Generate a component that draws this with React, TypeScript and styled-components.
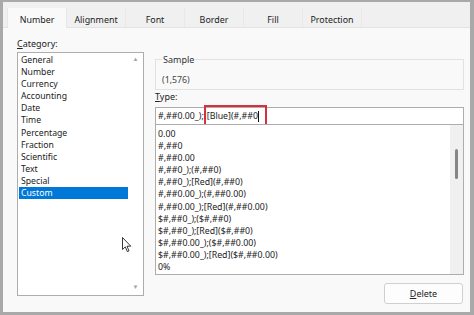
import React from "react";
import styled, { createGlobalStyle } from "styled-components";

interface RowProps {
  selected?: boolean;
}
interface TabProps {
  active?: boolean;
}

const tabs = ["Number", "Alignment", "Font", "Border", "Fill", "Protection"];
const categories = [
  "General",
  "Number",
  "Currency",
  "Accounting",
  "Date",
  "Time",
  "Percentage",
  "Fraction",
  "Scientific",
  "Text",
  "Special",
  "Custom",
];
const formats = [
  "0.00",
  "#,##0",
  "#,##0.00",
  "#,##0_);(#,##0)",
  "#,##0_);[Red](#,##0)",
  "#,##0.00_);(#,##0.00)",
  "#,##0.00_);[Red](#,##0.00)",
  "$#,##0_);($#,##0)",
  "$#,##0_);[Red]($#,##0)",
  "$#,##0.00_);($#,##0.00)",
  "$#,##0.00_);[Red]($#,##0.00)",
  "0%",
];

function App() {
  return (
    <>
      <GlobalStyle />
      <Frame>
        <TabBar>
          {tabs.map((t) => (
            <Tab key={t} active={t === "Number"}>
              {t}
            </Tab>
          ))}
        </TabBar>
        <Body>
          <LeftColumn>
            <Label>
              <u>C</u>ategory:
            </Label>
            <CategoryBox>
              <CategoryList>
                {categories.map((c) => (
                  <CategoryRow key={c} selected={c === "Custom"}>
                    {c}
                  </CategoryRow>
                ))}
              </CategoryList>
              <ThinScroll>
                <Arrow>▲</Arrow>
                <Arrow>▼</Arrow>
              </ThinScroll>
            </CategoryBox>
            <Pointer width="10" height="16" viewBox="0 0 10 16">
              <path
                d="M0.5 0.5 L0.5 12.5 L3.3 9.8 L5.3 14.6 L7 13.9 L5 9.2 L8.8 9.2 Z"
                fill="#fff"
                stroke="#222"
                strokeWidth="0.9"
                strokeLinejoin="round"
              />
            </Pointer>
          </LeftColumn>
          <RightColumn>
            <SampleBox>
              <legend>Sample</legend>
              <SampleValue>(1,576)</SampleValue>
            </SampleBox>
            <Label>
              <u>T</u>ype:
            </Label>
            <TypeInput>
              #,##0.00_);
              <Marked>
                [Blue](#,##0<Caret />
              </Marked>
            </TypeInput>
            <FormatBox>
              <FormatList>
                {formats.map((f) => (
                  <FormatRow key={f}>{f}</FormatRow>
                ))}
              </FormatList>
              <Track>
                <Thumb />
              </Track>
            </FormatBox>
            <ButtonRow>
              <DeleteButton>
                <u>D</u>elete
              </DeleteButton>
            </ButtonRow>
          </RightColumn>
        </Body>
      </Frame>
    </>
  );
}

export default App;

const GlobalStyle = createGlobalStyle`
  body {
    margin: 0;
    background: #f9f9f9;
    font-family: "Noto Sans", "Open Sans", sans-serif;
    color: #1a1a1a;
  }
  u { text-decoration-thickness: 1px; text-underline-offset: 1px; }
`;
const Frame = styled.div`
  width: 474px;
  height: 315px;
  box-sizing: border-box;
  border-style: solid;
  border-color: #a9a9a9;
  border-width: 2px 4px 3px 3px;
  background: #f9f9f9;
  display: flex;
  flex-direction: column;
`;
const TabBar = styled.div`
  height: 26px;
  flex: none;
  display: flex;
  padding: 6px 0 0 4px;
  background: #f0f0f0;
  border-bottom: 1px solid #e3e3e3;
  box-sizing: border-box;
`;
const Tab = styled.div<TabProps>`
  width: 58px;
  display: flex;
  align-items: center;
  justify-content: center;
  padding-top: 3px;
  font-size: 8.9px;
  color: #222;
  background: ${(p) => (p.active ? "#f9f9f9" : "transparent")};
  border-right: 1px solid ${(p) => (p.active ? "#e6e6e6" : "#e8e8e8")};
  border-left: ${(p) => (p.active ? "1px solid #e6e6e6" : "none")};
  margin-bottom: ${(p) => (p.active ? "-1px" : "0")};
`;
const Body = styled.div`
  flex: 1;
  display: grid;
  grid-template-columns: 127px 1fr;
  column-gap: 11px;
  padding: 9px 6px 0 14px;
`;
const LeftColumn = styled.div`
  position: relative;
  display: flex;
  flex-direction: column;
`;
const RightColumn = styled.div`
  display: flex;
  flex-direction: column;
  padding-top: 16px;
`;
const Label = styled.div`
  font-size: 9px;
  line-height: 14px;
  height: 15px;
  color: #222;
`;
const CategoryBox = styled.div`
  height: 244px;
  box-sizing: border-box;
  border: 1px solid #adadad;
  background: #fff;
  display: flex;
`;
const CategoryList = styled.div`
  flex: 1;
  padding: 1px 0 0 1px;
`;
const CategoryRow = styled.div<RowProps>`
  height: 12.1px;
  line-height: 12px;
  font-size: 8.7px;
  padding-left: 2px;
  background: ${(p) => (p.selected ? "#0078d7" : "transparent")};
  color: ${(p) => (p.selected ? "#fff" : "#222")};
`;
const ThinScroll = styled.div`
  width: 15px;
  display: flex;
  flex-direction: column;
  justify-content: space-between;
  align-items: center;
  padding: 2px 0 4px;
`;
const Arrow = styled.span`
  font-size: 6px;
  color: #a3a3a3;
`;
const Pointer = styled.svg`
  position: absolute;
  left: 105px;
  top: 200px;
`;
const SampleBox = styled.fieldset`
  margin: 0;
  height: 37px;
  box-sizing: border-box;
  border: 1px solid #e2e2e2;
  padding: 0 6px;
  legend {
    font-size: 9px;
    padding: 0 1px;
    margin-left: 0;
    color: #333;
  }
`;
const SampleValue = styled.div`
  font-size: 8.8px;
  color: #444;
  margin-top: 8px;
`;
const TypeInput = styled.div`
  margin-top: 2px;
  height: 17px;
  box-sizing: border-box;
  border: 1px solid #adadad;
  border-bottom: none;
  background: #fff;
  font-size: 8.8px;
  line-height: 16px;
  padding-left: 2px;
  display: flex;
  align-items: center;
  white-space: pre;
  color: #222;
`;
const Marked = styled.span`
  display: inline-flex;
  align-items: center;
  height: 22px;
  padding: 0 6px 0 1px;
  border: 2px solid #d6303a;
  box-sizing: border-box;
`;
const Caret = styled.span`
  display: inline-block;
  width: 1px;
  height: 11px;
  background: #111;
`;
const FormatBox = styled.div`
  height: 151px;
  box-sizing: border-box;
  border: 1px solid #adadad;
  background: #fff;
  display: flex;
`;
const FormatList = styled.div`
  flex: 1;
  padding: 3px 0 0 2px;
`;
const FormatRow = styled.div`
  height: 12.1px;
  line-height: 12px;
  font-size: 8.8px;
  color: #222;
  white-space: pre;
`;
const Track = styled.div`
  width: 13px;
  background: #f0f0f0;
  display: flex;
  justify-content: center;
  padding-top: 24px;
`;
const Thumb = styled.div`
  width: 3px;
  height: 30px;
  background: #858585;
  border-radius: 2px;
`;
const ButtonRow = styled.div`
  display: flex;
  justify-content: flex-end;
  padding-top: 8px;
`;
const DeleteButton = styled.button`
  width: 79px;
  height: 21px;
  box-sizing: border-box;
  border: 1px solid #d0d0d0;
  border-radius: 3px;
  background: #fdfdfd;
  font-family: inherit;
  font-size: 9px;
  color: #222;
  padding: 0;
  margin-right: 1px;
`;
